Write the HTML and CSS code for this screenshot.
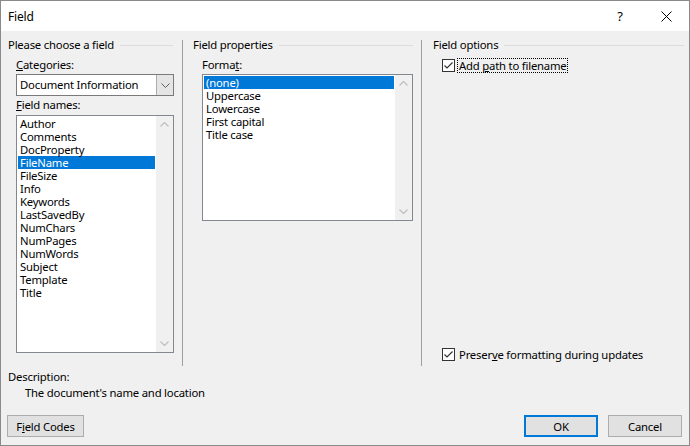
FILE: index.html
```html
<!DOCTYPE html>
<html>
<head>
<meta charset="utf-8">
<link rel="stylesheet" href="styles.css">
</head>
<body>
<div class="window">
  <div class="titlebar">
    <div class="title">Field</div>
    <div class="tb-btn help">?</div>
    <div class="tb-btn close">
      <svg width="11" height="11" viewBox="0 0 11 11"><path d="M0.5 0.5 L10.5 10.5 M10.5 0.5 L0.5 10.5" stroke="#000" stroke-width="1" fill="none"/></svg>
    </div>
  </div>
  <div class="body">
    <div class="main">
      <div class="col col1">
        <div class="group-head"><span>Please choose a field</span><i class="rule"></i></div>
        <div class="label"><u>C</u>ategories:</div>
        <div class="combo">
          <span class="combo-text">Document Information</span>
          <span class="combo-btn">
            <svg width="9" height="5" viewBox="0 0 9 5"><path d="M0.5 0.5 L4.5 4.5 L8.5 0.5" stroke="#606060" stroke-width="1" fill="none"/></svg>
          </span>
        </div>
        <div class="label"><u>F</u>ield names:</div>
        <div class="listbox names">
          <div class="items">
            <div class="item">Author</div>
            <div class="item">Comments</div>
            <div class="item">DocProperty</div>
            <div class="item sel">FileName</div>
            <div class="item">FileSize</div>
            <div class="item">Info</div>
            <div class="item">Keywords</div>
            <div class="item">LastSavedBy</div>
            <div class="item">NumChars</div>
            <div class="item">NumPages</div>
            <div class="item">NumWords</div>
            <div class="item">Subject</div>
            <div class="item">Template</div>
            <div class="item">Title</div>
          </div>
          <div class="scroll">
            <svg width="9" height="5" viewBox="0 0 9 5"><path d="M0.5 4.5 L4.5 0.5 L8.5 4.5" stroke="#c0c0c0" stroke-width="1.3" fill="none"/></svg>
            <svg width="9" height="5" viewBox="0 0 9 5"><path d="M0.5 0.5 L4.5 4.5 L8.5 0.5" stroke="#c0c0c0" stroke-width="1.3" fill="none"/></svg>
          </div>
        </div>
      </div>
      <div class="col col2">
        <div class="group-head"><span>Field properties</span><i class="rule"></i></div>
        <div class="label">Forma<u>t</u>:</div>
        <div class="listbox formats">
          <div class="items">
            <div class="item sel">(none)</div>
            <div class="item">Uppercase</div>
            <div class="item">Lowercase</div>
            <div class="item">First capital</div>
            <div class="item">Title case</div>
          </div>
          <div class="scroll">
            <svg width="9" height="5" viewBox="0 0 9 5"><path d="M0.5 4.5 L4.5 0.5 L8.5 4.5" stroke="#c0c0c0" stroke-width="1.3" fill="none"/></svg>
            <svg width="9" height="5" viewBox="0 0 9 5"><path d="M0.5 0.5 L4.5 4.5 L8.5 0.5" stroke="#c0c0c0" stroke-width="1.3" fill="none"/></svg>
          </div>
        </div>
      </div>
      <div class="col col3">
        <div class="group-head"><span>Field options</span><i class="rule"></i></div>
        <div class="check-row first">
          <span class="cb"><svg width="13" height="13" viewBox="0 0 13 13"><rect x="0.5" y="0.5" width="12" height="12" fill="#fff" stroke="#333"/><path d="M2.5 6.5 L5 9 L10.5 3.5" stroke="#333" stroke-width="1.2" fill="none"/></svg></span>
          <span class="cb-label focus">Add <u>p</u>ath to filename</span>
        </div>
        <div class="check-row last">
          <span class="cb"><svg width="13" height="13" viewBox="0 0 13 13"><rect x="0.5" y="0.5" width="12" height="12" fill="#fff" stroke="#333"/><path d="M2.5 6.5 L5 9 L10.5 3.5" stroke="#333" stroke-width="1.2" fill="none"/></svg></span>
          <span class="cb-label">Preser<u>v</u>e formatting during updates</span>
        </div>
      </div>
    </div>
    <div class="desc-label">Description:</div>
    <div class="desc-text">The document's name and location</div>
    <div class="buttons">
      <div class="btn codes">F<u>i</u>eld Codes</div>
      <div class="spacer"></div>
      <div class="btn ok">OK</div>
      <div class="btn cancel">Cancel</div>
    </div>
  </div>
</div>
</body>
</html>
```
FILE: styles.css
```css
* { box-sizing: border-box; }
html, body { margin: 0; padding: 0; }
body {
  width: 690px;
  height: 446px;
  font-family: "Noto Sans", "Open Sans", sans-serif;
  font-size: 11.3px;
  letter-spacing: -0.2px;
  color: #000;
  background: #fff;
  overflow: hidden;
}
u { text-decoration: underline; text-underline-offset: 1px; }
.window {
  width: 690px;
  height: 446px;
  border: 1px solid #8a8a8a;
  display: flex;
  flex-direction: column;
}
.titlebar {
  height: 30px;
  background: #fff;
  display: flex;
  align-items: center;
  flex: none;
}
.title {
  flex: 1;
  padding-left: 7px;
  font-size: 12px;
}
.tb-btn {
  width: 46px;
  height: 30px;
  display: flex;
  align-items: center;
  justify-content: center;
}
.help { font-size: 13px; }
.body {
  flex: 1;
  background: #f0f0f0;
  display: flex;
  flex-direction: column;
}
.main {
  display: flex;
  margin-top: 9px;
  height: 326px;
}
.col {
  display: flex;
  flex-direction: column;
}
.col1 { width: 182px; padding: 0 9px 0 7px; border-right: 1px solid #a0a0a0; }
.col2 { width: 239px; padding: 0 8px 0 10px; border-right: 1px solid #a0a0a0; }
.col3 { flex: 1; padding: 0 5px 0 11px; }
.group-head {
  display: flex;
  align-items: center;
  height: 14px;
  line-height: 14px;
  margin-top: -2px;
  white-space: nowrap;
}
.rule {
  flex: 1;
  height: 1px;
  background: #dcdcdc;
  margin-left: 6px;
}
.label {
  height: 14px;
  line-height: 14px;
  margin-top: 6px;
}
.col1 .label { margin-left: 8px; }
.col2 .label { margin-left: 9px; }
.combo {
  margin: 2px 0 0 8px;
  width: 158px;
  height: 22px;
  background: #fff;
  border: 1px solid #7a7a7a;
  display: flex;
}
.combo-text {
  flex: 1;
  padding-left: 3px;
  line-height: 20px;
}
.combo-btn {
  width: 17px;
  background: #e5e5e5;
  border-left: 1px solid #acacac;
  display: flex;
  align-items: center;
  justify-content: center;
}
.col1 .combo + .label { margin-top: 2px; }
.listbox {
  background: #fff;
  border: 1px solid #828790;
  display: flex;
}
.names { width: 158px; height: 238px; margin: 3px 0 0 8px; }
.formats { width: 211px; height: 147px; margin: 2px 0 0 9px; }
.items {
  flex: 1;
  padding: 1px 1px 0 1px;
}
.item {
  height: 13px;
  line-height: 13px;
  padding-left: 2px;
  white-space: nowrap;
}
.item.sel { background: #0078d7; color: #fff; }
.scroll {
  width: 17px;
  background: #f0f0f0;
  display: flex;
  flex-direction: column;
  justify-content: space-between;
  align-items: center;
  padding: 6px 0 6px 0;
}
.check-row {
  display: flex;
  align-items: center;
  height: 15px;
  margin-left: 9px;
}
.check-row.first { margin-top: 6px; }
.check-row.last { margin-top: auto; margin-bottom: 4px; }
.cb { width: 13px; height: 13px; display: block; }
.cb svg { display: block; }
.cb-label {
  display: inline-block;
  margin-left: 2px;
  padding: 0 1px 0 2px;
  line-height: 15px;
  height: 15px;
  white-space: nowrap;
}
.focus { outline: 1px dotted #000; outline-offset: -1px; }
.desc-label {
  margin-top: 4px;
  padding-left: 7px;
  height: 14px;
  line-height: 14px;
}
.desc-text {
  margin-top: 2px;
  padding-left: 24px;
  height: 14px;
  line-height: 14px;
}
.buttons {
  margin-top: 15px;
  display: flex;
  padding: 0 7px 0 6px;
  gap: 10px;
}
.spacer { flex: 1; }
.btn {
  height: 22px;
  background: #e1e1e1;
  border: 1px solid #adadad;
  display: flex;
  align-items: center;
  justify-content: center;
}
.codes { width: 77px; }
.ok { width: 74px; border: 2px solid #0078d7; }
.cancel { width: 74px; }
```
